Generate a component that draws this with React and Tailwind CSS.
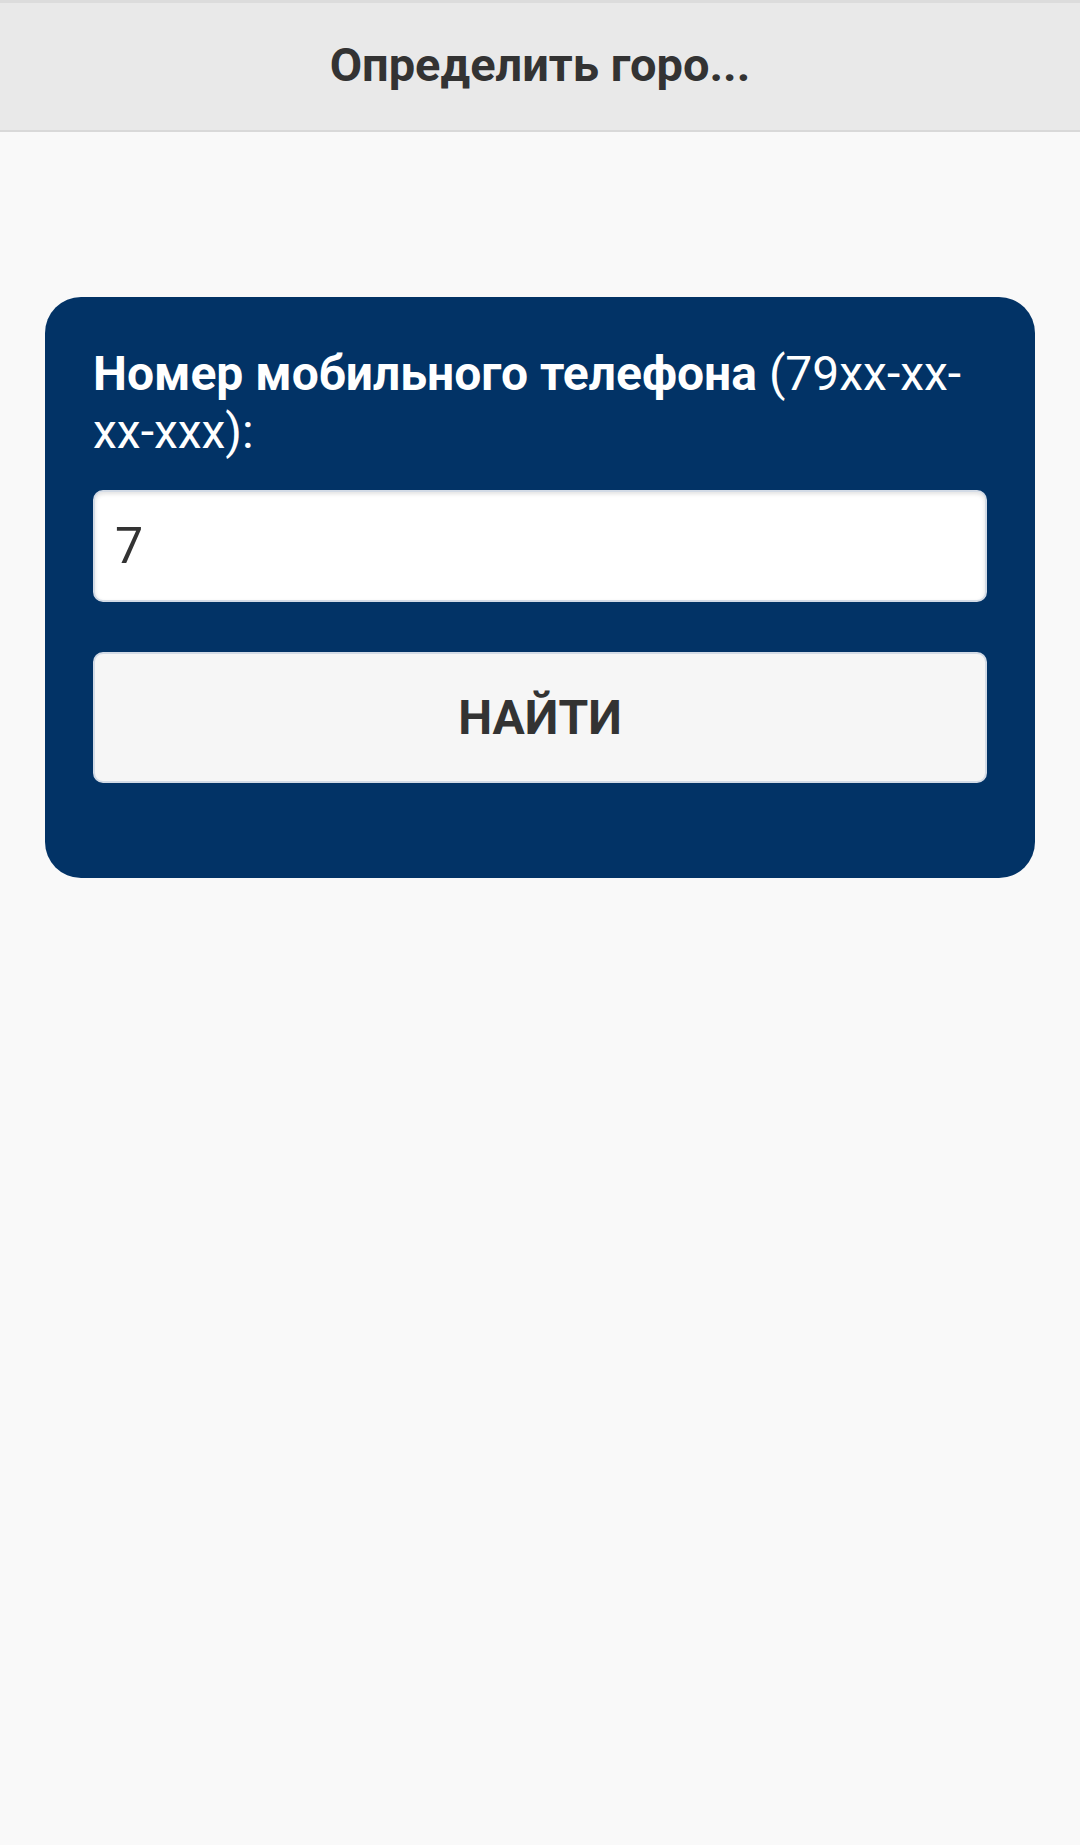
export default function App() {
  return (
    <div className="min-h-[1845px] bg-[#f9f9f9] font-['Roboto',sans-serif]">
      {/* HEADER */}
      <div className="border-t-[3px] border-b-2 border-t-[#dcdcdc] border-b-[#d9d9d9] bg-[#e9e9e9] h-[132px] flex items-center justify-center">
        <h1 className="text-[47px] font-bold text-[#333333] leading-none pb-1">
          Определить горо...
        </h1>
      </div>

      {/* FORM CARD */}
      <div className="px-[45px] pt-[165px]">
        <div className="bg-[#023366] rounded-[36px] px-12 pt-12 pb-[95px]">
          <label className="block text-[48px] leading-[58px] text-white">
            <span className="font-bold">Номер мобильного телефона</span> (79xx-xx-xx-xxx):
          </label>
          <div className="mt-[29px] h-[112px] bg-white rounded-[10px] border-2 border-[#d3dbe6] shadow-[inset_0_2px_4px_rgba(0,0,0,0.12)] flex items-center px-5">
            <span className="text-[50px] text-[#333333]">7</span>
          </div>
          <button className="mt-[50px] w-full h-[131px] bg-[#f6f6f6] rounded-[10px] border-2 border-[#d3dbe6] text-[48px] font-bold text-[#333333]">
            НАЙТИ
          </button>
        </div>
      </div>
    </div>
  );
}
